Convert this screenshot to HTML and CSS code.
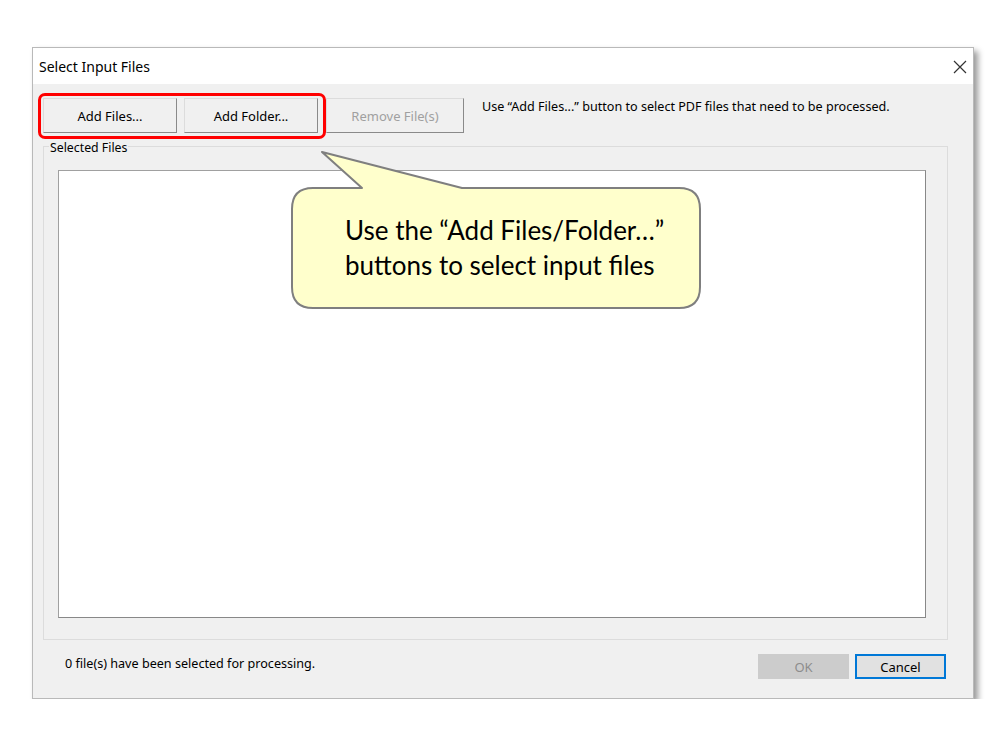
FILE: index.html
```html
<!DOCTYPE html>
<html lang="en">
<head>
<meta charset="UTF-8">
<meta name="viewport" content="width=device-width, initial-scale=1.0">
<title>Select Input Files</title>
<link rel="stylesheet" href="styles.css">
</head>
<body>
<div class="window">
  <div class="titlebar">
    <span class="title">Select Input Files</span>
    <svg class="close" width="14" height="14" viewBox="0 0 14 14">
      <path d="M1 1 L13 13 M13 1 L1 13" stroke="#333" stroke-width="1.2" fill="none"/>
    </svg>
  </div>
  <div class="content">
    <div class="toolbar">
      <button class="btn">Add Files...</button>
      <button class="btn">Add Folder...</button>
      <button class="btn btn-remove" disabled>Remove File(s)</button>
      <span class="hint">Use “Add Files...” button to select PDF files that need to be processed.</span>
    </div>
    <div class="groupbox">
      <span class="group-label">Selected Files</span>
      <div class="listbox"></div>
    </div>
    <div class="footer">
      <span class="status">0 file(s) have been selected for processing.</span>
      <button class="btn-dlg btn-ok" disabled>OK</button>
      <button class="btn-dlg btn-cancel">Cancel</button>
    </div>
  </div>
</div>

<!-- annotation overlay -->
<div class="highlight"></div>
<div class="callout">
  <svg class="callout-shape" width="414" height="162" viewBox="0 0 414 162">
    <path d="M32 2 L172 38 L389 38 Q410 38 410 59 L410 137 Q410 158 389 158 L23 158 Q2 158 2 137 L2 59 Q2 38 23 38 L72 38 Z"
          fill="#ffffcc" stroke="#7f7f7f" stroke-width="2" stroke-linejoin="round"/>
  </svg>
  <div class="callout-text">Use the “Add Files/Folder…”<br>buttons to select input files</div>
</div>
</body>
</html>
```

FILE: styles.css
```css
* {
  box-sizing: border-box;
}
body {
  margin: 0;
  background: #fff;
  font-family: "Noto Sans", "Open Sans", sans-serif;
  font-size: 12px;
  color: #000;
}
.window {
  margin: 47px 0 0 32px;
  width: 942px;
  height: 652px;
  border: 1px solid #b9b9b9;
  background: #f0f0f0;
  box-shadow: 4px 4px 6px rgba(0, 0, 0, 0.4);
  display: flex;
  flex-direction: column;
}
.titlebar {
  flex: none;
  height: 36px;
  background: #fff;
  display: flex;
  align-items: center;
  justify-content: space-between;
  padding: 0 6px 0 6px;
}
.title {
  font-size: 14px;
  color: #000;
}
.close {
  margin-top: 1px;
}
.content {
  flex: 1;
  padding: 14px 25px 0 10px;
  display: flex;
  flex-direction: column;
}
.toolbar {
  display: flex;
  align-items: flex-start;
  height: 35px;
  flex: none;
}
.btn {
  width: 134px;
  height: 35px;
  margin-right: 7px;
  background: #f0f0f0;
  border: 1px solid;
  border-color: #dcdcdc #8a8a8a #8a8a8a #dcdcdc;
  font-family: inherit;
  font-size: 13px;
  color: #000;
  padding: 0;
}
.btn-remove {
  width: 138px;
  margin-left: 1px;
  color: #a0a0a0;
}
.hint {
  margin-left: 11px;
  font-size: 12.6px;
}
.groupbox {
  flex: none;
  margin-top: 13px;
  height: 494px;
  border: 1px solid #dcdcdc;
  position: relative;
  padding: 23px 21px 21px 14px;
}
.group-label {
  position: absolute;
  top: -6px;
  left: 5px;
  background: #f0f0f0;
  padding: 0 1px;
  font-size: 12.3px;
  line-height: 14px;
}
.listbox {
  height: 100%;
  background: #fff;
  border: 1px solid #a0a0a0;
  border-right-color: #888;
  border-bottom-color: #888;
}
.footer {
  flex: none;
  margin-top: 14px;
  display: flex;
  align-items: center;
  height: 25px;
  padding-right: 2px;
}
.status {
  flex: 1;
  padding-left: 22px;
  padding-bottom: 6px;
  font-size: 12.6px;
}
.btn-dlg {
  width: 91px;
  height: 25px;
  font-family: inherit;
  font-size: 13px;
  padding: 0;
}
.btn-ok {
  background: #cccccc;
  border: 1px solid #cccccc;
  color: #8d8d8d;
  margin-right: 6px;
}
.btn-cancel {
  background: #e1e1e1;
  border: 2px solid #0078d7;
  color: #000;
}
.highlight {
  position: absolute;
  left: 38px;
  top: 93px;
  width: 288px;
  height: 46px;
  border: 3px solid #f00;
  border-radius: 7px;
}
.callout {
  position: absolute;
  left: 290px;
  top: 150px;
  width: 414px;
  height: 162px;
}
.callout-shape {
  position: absolute;
  left: 0;
  top: 0;
}
.callout-text {
  position: absolute;
  left: 55px;
  top: 63px;
  white-space: nowrap;
  font-family: Lato, "Noto Sans", sans-serif;
  font-size: 26px;
  line-height: 35px;
  color: #000;
}
```
